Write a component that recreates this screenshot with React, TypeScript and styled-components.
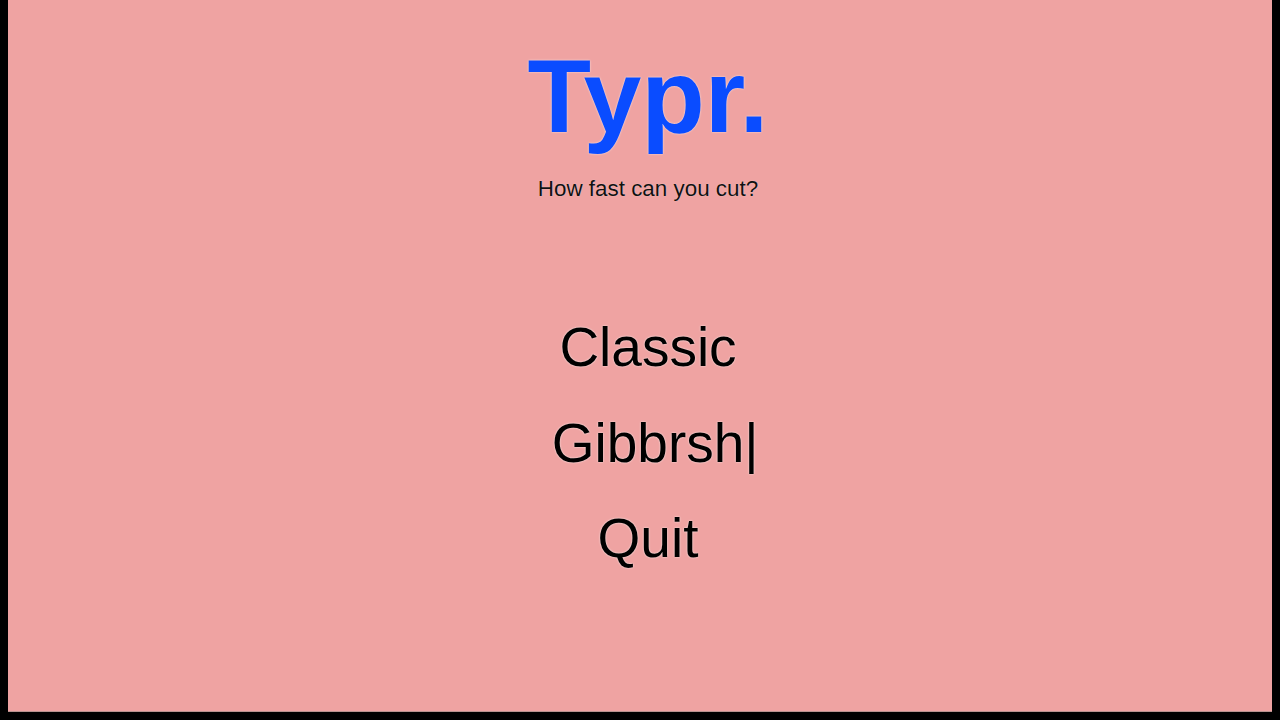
import React from "react";
import styled, { createGlobalStyle } from "styled-components";

const Global = createGlobalStyle`
  html, body { margin: 0; padding: 0; background: #000; }
  body { font-family: "Liberation Sans", Arial, sans-serif; }
`;

const Page = styled.div`
  width: 1280px;
  height: 720px;
  box-sizing: border-box;
  padding: 0 8px 8px 8px;
  background: #000;
`;

const Panel = styled.main`
  height: 712px;
  box-sizing: border-box;
  background: #efa3a2;
  border-bottom: 1px solid #b8928f;
  display: flex;
  flex-direction: column;
  align-items: center;
  padding: 44px 0 0 16px;
`;

const Title = styled.h1`
  margin: 0;
  font-size: 104px;
  line-height: 1;
  font-weight: 700;
  color: #0a4cff;
  text-shadow: 0 0 2px rgba(255, 255, 255, 0.85);
`;

const Subtitle = styled.p`
  margin: 30px 0 0;
  font-size: 22.4px;
  line-height: 1;
  color: #111;
  text-shadow: 0 0 1px rgba(255, 255, 255, 0.6);
`;

const Menu = styled.nav`
  margin-top: 120px;
  display: flex;
  flex-direction: column;
  align-items: center;
  gap: 40.5px;
`;

const MenuItem = styled.div<{ $active?: boolean }>`
  position: relative;
  font-size: 55px;
  line-height: 1;
  color: #000;
  text-shadow: 0 0 2px rgba(255, 255, 255, 0.9);

  &::after {
    content: ${(p) => (p.$active ? '"|"' : "none")};
    position: absolute;
    left: 100%;
    top: 0;
  }
`;

export default function App() {
  return (
    <>
      <Global />
      <Page>
        <Panel>
          <Title>Typr.</Title>
          <Subtitle>How fast can you cut?</Subtitle>
          <Menu>
            <MenuItem>Classic</MenuItem>
            <MenuItem $active>Gibbrsh</MenuItem>
            <MenuItem>Quit</MenuItem>
          </Menu>
        </Panel>
      </Page>
    </>
  );
}
